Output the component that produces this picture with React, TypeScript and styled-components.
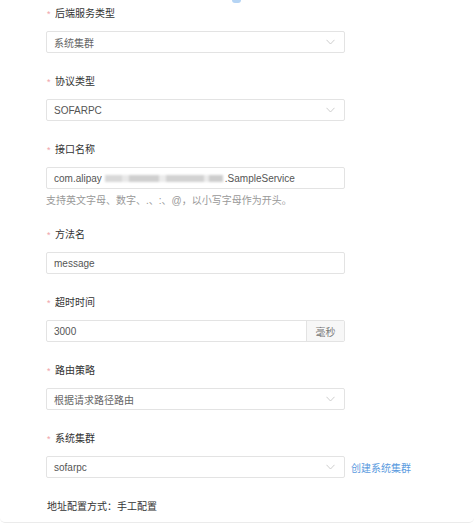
import React from "react";
import styled, { createGlobalStyle } from "styled-components";

const Global = createGlobalStyle`
  html, body { margin: 0; padding: 0; background: #fff; }
  body {
    font-family: "Helvetica Neue", "Liberation Sans", "Noto Sans CJK SC", sans-serif;
    font-size: 10px;
    color: #333;
    -webkit-font-smoothing: antialiased;
  }
`;

const Card = styled.div`
  width: 474px;
  box-sizing: border-box;
  height: 523px;
  border-bottom: 1px solid #ebebeb;
  border-radius: 0 0 5px 5px;
  overflow: hidden;
`;

const StepDot = styled.div`
  width: 9px;
  height: 3px;
  margin: 0 auto 0 232px;
  background: #b5d4f4;
  border-radius: 0 0 5px 5px;
`;

const Form = styled.div`
  padding: 1px 0 0 46px;
  display: flex;
  flex-direction: column;
`;

const Item = styled.div<{ $tight?: boolean }>`
  display: flex;
  flex-direction: column;
  margin-bottom: ${(p) => (p.$tight ? "16px" : "19px")};
`;

const Label = styled.div`
  height: 20px;
  line-height: 20px;
  font-size: 10px;
  color: #333;
  margin-bottom: 7px;
  display: flex;
  align-items: center;
`;

const Star = styled.span`
  color: #f0a3a8;
  font-size: 9px;
  width: 8px;
  margin-left: 1px;
  font-family: "Liberation Sans", sans-serif;
`;

const Row = styled.div`
  display: flex;
  align-items: center;
  gap: 6px;
`;

const Box = styled.div`
  width: 299px;
  height: 22px;
  box-sizing: border-box;
  border: 1px solid #e3e3e3;
  border-radius: 2px;
  display: flex;
  align-items: center;
  background: #fff;
  overflow: hidden;
`;

const Value = styled.span<{ $muted?: boolean }>`
  flex: 1;
  padding-left: 7px;
  font-size: 10px;
  color: ${(p) => (p.$muted ? "#666" : "#555")};
  white-space: nowrap;
  display: flex;
  align-items: center;
`;

const Redacted = styled.span`
  display: inline-block;
  width: 118px;
  height: 7px;
  margin: 1px 2px 0 3px;
  background: linear-gradient(
    90deg,
    #d8d8d8 0 14%,
    #e8e8e8 14% 20%,
    #cfcfcf 20% 46%,
    #ececec 46% 52%,
    #d2d2d2 52% 84%,
    #ebebeb 84% 88%,
    #cdcdcd 88% 100%
  );
  filter: blur(1.2px);
`;

const Chevron = styled.svg`
  width: 9px;
  height: 6px;
  margin-right: 9px;
  flex: none;
`;

const Addon = styled.div`
  width: 37px;
  height: 100%;
  border-left: 1px solid #e3e3e3;
  background: #f7f7f7;
  color: #777;
  font-size: 10px;
  display: flex;
  align-items: center;
  justify-content: center;
`;

const Help = styled.div`
  margin-top: 3px;
  line-height: 17px;
  font-size: 10px;
  color: #999;
`;

const Link = styled.a`
  color: #5b9be0;
  font-size: 10px;
  text-decoration: none;
  cursor: pointer;
`;

const Plain = styled.div`
  line-height: 20px;
  font-size: 10px;
  color: #333;
  margin-left: 1px;
`;

const Arrow = () => (
  <Chevron viewBox="0 0 9 6">
    <path d="M0.5 0.8 L4.5 5 L8.5 0.8" fill="none" stroke="#c8c8c8" strokeWidth="0.9" />
  </Chevron>
);

const Select = ({ value, muted }: { value: string; muted?: boolean }) => (
  <Box>
    <Value $muted={muted}>{value}</Value>
    <Arrow />
  </Box>
);

const FieldLabel = ({ children }: { children: React.ReactNode }) => (
  <Label>
    <Star>*</Star>
    {children}
  </Label>
);

export default function App() {
  return (
    <>
      <Global />
      <Card>
        <StepDot />
        <Form>
          <Item>
            <FieldLabel>后端服务类型</FieldLabel>
            <Select value="系统集群" muted />
          </Item>
          <Item>
            <FieldLabel>协议类型</FieldLabel>
            <Select value="SOFARPC" />
          </Item>
          <Item $tight>
            <FieldLabel>接口名称</FieldLabel>
            <Box>
              <Value>
                com.alipay
                <Redacted />
                .SampleService
              </Value>
            </Box>
            <Help>支持英文字母、数字、.、:、@，以小写字母作为开头。</Help>
          </Item>
          <Item>
            <FieldLabel>方法名</FieldLabel>
            <Box>
              <Value>message</Value>
            </Box>
          </Item>
          <Item>
            <FieldLabel>超时时间</FieldLabel>
            <Box>
              <Value>3000</Value>
              <Addon>毫秒</Addon>
            </Box>
          </Item>
          <Item>
            <FieldLabel>路由策略</FieldLabel>
            <Select value="根据请求路径路由" muted />
          </Item>
          <Item>
            <FieldLabel>系统集群</FieldLabel>
            <Row>
              <Select value="sofarpc" />
              <Link>创建系统集群</Link>
            </Row>
          </Item>
          <Plain>地址配置方式：手工配置</Plain>
        </Form>
      </Card>
    </>
  );
}
